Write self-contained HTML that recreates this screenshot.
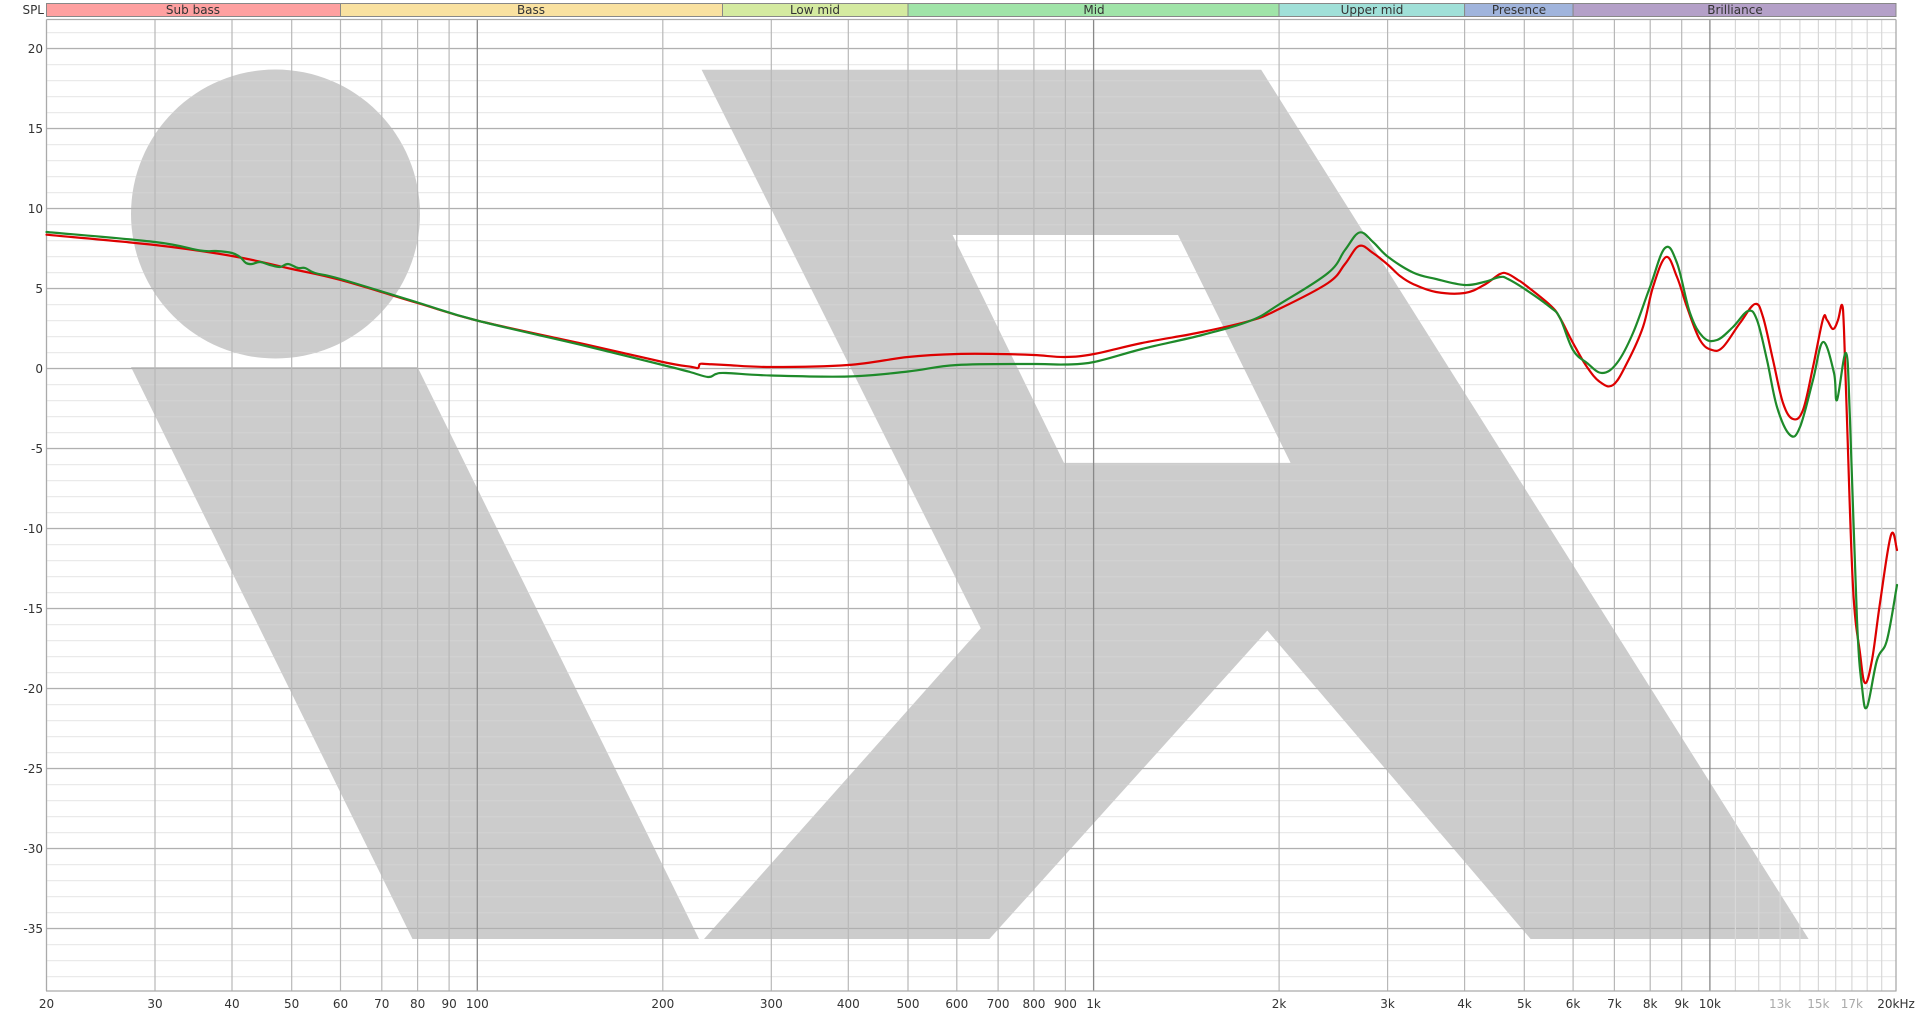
<!DOCTYPE html>
<html><head><meta charset="utf-8"><style>
html,body{margin:0;padding:0;background:#fff;width:1920px;height:1016px;overflow:hidden}
svg{display:block}
text{font-family:"DejaVu Sans","Liberation Sans",sans-serif;font-size:12px;fill:#333}
</style></head><body>
<svg width="1920" height="1016" viewBox="0 0 1920 1016" xmlns="http://www.w3.org/2000/svg">
<defs>
<pattern id="hl" x="0" y="0.5" width="20" height="16" patternUnits="userSpaceOnUse">
<line x1="0" y1="0" x2="20" y2="0" stroke="#d6d6d6" stroke-width="1.2"/>
</pattern>
</defs>
<g fill="#cccccc">
<circle cx="275.5" cy="214" r="144.5"/>
<polygon points="131,367 417.5,367 699,939 412.5,939"/>
<path fill-rule="evenodd" d="M701.6,69.8 L1261.2,69.8 L1808.6,939 L1530.6,939 L1267.3,630.6 L989.4,939 L704,939 L980.8,628.2 Z M952.6,235 L1178,235 L1290.6,462.9 L1064,462.9 Z"/>
</g>
<rect x="46.5" y="20" width="1850" height="971" fill="url(#hl)"/>
<g stroke="#b0b0b0" stroke-width="1.2">
<line x1="46" x2="1896" y1="48.5" y2="48.5"/><line x1="46" x2="1896" y1="128.5" y2="128.5"/>
<line x1="46" x2="1896" y1="208.5" y2="208.5"/><line x1="46" x2="1896" y1="288.5" y2="288.5"/>
<line x1="46" x2="1896" y1="368.5" y2="368.5"/><line x1="46" x2="1896" y1="448.5" y2="448.5"/>
<line x1="46" x2="1896" y1="528.5" y2="528.5"/><line x1="46" x2="1896" y1="608.5" y2="608.5"/>
<line x1="46" x2="1896" y1="688.5" y2="688.5"/><line x1="46" x2="1896" y1="768.5" y2="768.5"/>
<line x1="46" x2="1896" y1="848.5" y2="848.5"/><line x1="46" x2="1896" y1="928.5" y2="928.5"/>
</g>
<g stroke="#b8b8b8" stroke-width="1.2">
<line x1="155" x2="155" y1="20" y2="991"/><line x1="232" x2="232" y1="20" y2="991"/>
<line x1="291.7" x2="291.7" y1="20" y2="991"/><line x1="340.5" x2="340.5" y1="20" y2="991"/>
<line x1="381.8" x2="381.8" y1="20" y2="991"/><line x1="417.6" x2="417.6" y1="20" y2="991"/>
<line x1="449.1" x2="449.1" y1="20" y2="991"/>
<line x1="662.8" x2="662.8" y1="20" y2="991"/><line x1="771.3" x2="771.3" y1="20" y2="991"/>
<line x1="848.3" x2="848.3" y1="20" y2="991"/><line x1="908" x2="908" y1="20" y2="991"/>
<line x1="956.8" x2="956.8" y1="20" y2="991"/><line x1="998.1" x2="998.1" y1="20" y2="991"/>
<line x1="1033.9" x2="1033.9" y1="20" y2="991"/><line x1="1065.4" x2="1065.4" y1="20" y2="991"/>
<line x1="1279.1" x2="1279.1" y1="20" y2="991"/><line x1="1387.6" x2="1387.6" y1="20" y2="991"/>
<line x1="1464.6" x2="1464.6" y1="20" y2="991"/><line x1="1524.3" x2="1524.3" y1="20" y2="991"/>
<line x1="1573.1" x2="1573.1" y1="20" y2="991"/><line x1="1614.4" x2="1614.4" y1="20" y2="991"/>
<line x1="1650.2" x2="1650.2" y1="20" y2="991"/><line x1="1681.7" x2="1681.7" y1="20" y2="991"/>
</g>
<g stroke="#d8d8d8" stroke-width="1.2">
<line x1="1735.4" x2="1735.4" y1="20" y2="991"/><line x1="1758.7" x2="1758.7" y1="20" y2="991"/>
<line x1="1780.1" x2="1780.1" y1="20" y2="991"/><line x1="1799.9" x2="1799.9" y1="20" y2="991"/>
<line x1="1818.4" x2="1818.4" y1="20" y2="991"/><line x1="1835.7" x2="1835.7" y1="20" y2="991"/>
<line x1="1851.9" x2="1851.9" y1="20" y2="991"/><line x1="1867.2" x2="1867.2" y1="20" y2="991"/>
<line x1="1881.7" x2="1881.7" y1="20" y2="991"/>
</g>
<g stroke="#888" stroke-width="1.3">
<line x1="477.3" x2="477.3" y1="20" y2="991"/><line x1="1093.6" x2="1093.6" y1="20" y2="991"/>
<line x1="1709.9" x2="1709.9" y1="20" y2="991"/>
</g>
<g stroke="#aaa" stroke-width="1.3" fill="none">
<line x1="46.5" y1="19.5" x2="1896" y2="19.5"/>
<line x1="46.5" y1="19.5" x2="46.5" y2="991"/>
<line x1="46" y1="991" x2="1896.5" y2="991"/>
<line x1="1896" y1="19.5" x2="1896" y2="991"/>
</g>
<g stroke="#888" stroke-width="1">
<rect x="46.5" y="3.5" width="294" height="13" fill="#fea0a0"/>
<rect x="340.5" y="3.5" width="382" height="13" fill="#f9e1a0"/>
<rect x="722.5" y="3.5" width="185.5" height="13" fill="#d4eaa0"/>
<rect x="908" y="3.5" width="371" height="13" fill="#a0e4a8"/>
<rect x="1279" y="3.5" width="185.6" height="13" fill="#a0e0d8"/>
<rect x="1464.6" y="3.5" width="108.5" height="13" fill="#a0b4dc"/>
<rect x="1573.1" y="3.5" width="322.9" height="13" fill="#b4a0c8"/>
</g>
<g text-anchor="middle" style="font-size:11px">
<text x="193" y="14">Sub bass</text><text x="531" y="14">Bass</text>
<text x="815" y="14">Low mid</text><text x="1094" y="14">Mid</text>
<text x="1372" y="14">Upper mid</text><text x="1519" y="14">Presence</text>
<text x="1735" y="14">Brilliance</text>
</g>
<text x="44" y="14" text-anchor="end">SPL</text>
<g text-anchor="end">
<text x="43" y="53">20</text><text x="43" y="133">15</text><text x="43" y="213">10</text>
<text x="43" y="293">5</text><text x="43" y="373">0</text><text x="43" y="453">-5</text>
<text x="43" y="533">-10</text><text x="43" y="613">-15</text><text x="43" y="693">-20</text>
<text x="43" y="773">-25</text><text x="43" y="853">-30</text><text x="43" y="933">-35</text>
</g>
<g text-anchor="middle">
<text x="46.5" y="1008">20</text><text x="155" y="1008">30</text><text x="232" y="1008">40</text>
<text x="291.7" y="1008">50</text><text x="340.5" y="1008">60</text><text x="381.8" y="1008">70</text>
<text x="417.6" y="1008">80</text><text x="449.1" y="1008">90</text><text x="477.3" y="1008">100</text>
<text x="662.8" y="1008">200</text><text x="771.3" y="1008">300</text><text x="848.3" y="1008">400</text>
<text x="908" y="1008">500</text><text x="956.8" y="1008">600</text><text x="998.1" y="1008">700</text>
<text x="1033.9" y="1008">800</text><text x="1065.4" y="1008">900</text><text x="1093.6" y="1008">1k</text>
<text x="1279.1" y="1008">2k</text><text x="1387.6" y="1008">3k</text><text x="1464.6" y="1008">4k</text>
<text x="1524.3" y="1008">5k</text><text x="1573.1" y="1008">6k</text><text x="1614.4" y="1008">7k</text>
<text x="1650.2" y="1008">8k</text><text x="1681.7" y="1008">9k</text><text x="1709.9" y="1008">10k</text>
<text x="1780.1" y="1008" style="fill:#aaa">13k</text><text x="1818.4" y="1008" style="fill:#aaa">15k</text>
<text x="1851.9" y="1008" style="fill:#aaa">17k</text><text x="1896" y="1008">20kHz</text>
</g>
<g id="curves" fill="none" stroke-width="2.2" stroke-linejoin="round" stroke-linecap="round">
<polyline stroke="#dd0000" points="46.5,234.7 155,245 232,256 292,269 340.5,280 417.6,303 477,320.5 585.8,344.5 662.8,362 692,367 698,368 700,364 706,364 726,365 771,367 848,365 908,357 957,354 998,354 1034,355 1065,357 1094,354 1142,343 1202,332 1251,320.5 1279,309 1328,283 1345,264 1359,246 1373,253 1387.6,264.5 1400,276 1413,284 1436,292 1464.6,293 1484,285 1500,274 1508,274 1518,280 1524,284 1550,305 1560,318 1573,343 1587,367 1600,382 1613,385 1627,363 1643,327 1653,287 1666,257 1677,277 1687,307 1700,340 1712,350 1723,347 1740,323 1755,304 1763,317 1773,360 1783,403 1793,419 1803,410 1813,367 1823,319 1827,320 1833,329 1838,320 1842,305 1844,330 1847,420 1853,587 1860,653 1865,683 1872,660 1880,603 1891,535 1897,550"/>
<polyline stroke="#1e8a2a" points="46.5,232 155,242 200,250.5 216,251 232,253 240,257 246,263 252,264 260,262 270,265 280,267 288,264 298,268 305,268 315,273 340.5,279 417.6,302.5 477,320.5 585.8,346 662.8,365 690,372 708,377 716,374 726,373 771,375.5 848,376.5 908,371.5 957,365 1034,364 1065,364.5 1094,362 1142,349 1202,335 1251,320.5 1279,304.5 1328,273 1345,250 1359.5,232.5 1373,242 1387.6,256.5 1413,272.5 1436,279 1464.6,285 1484,282 1500,277 1508,279 1524,288.5 1550,307 1560,318 1573,350 1587,363 1602,373 1617,363 1633,333 1650,287 1665,248 1677,263 1690,313 1703,337 1717,340 1733,327 1748,311 1757,320 1767,360 1777,407 1790,435 1800,427 1813,380 1823,342 1834,373 1837,400 1846,353 1850,420 1857,620 1862,687 1867,707 1877,660 1887,640 1897,585"/>
</g>
</svg>
<script>
(function(){
var ns="http://www.w3.org/2000/svg";
var pls=document.querySelectorAll("#curves polyline");
for(var k=0;k<pls.length;k++){
var pl=pls[k];
var a=pl.getAttribute("points").trim().split(/\s+/).map(function(s){var q=s.split(",");return[+q[0],+q[1]];});
var d="M"+a[0][0]+","+a[0][1];
for(var i=0;i<a.length-1;i++){
var p0=a[i-1]||a[i],p1=a[i],p2=a[i+1],p3=a[i+2]||p2;
var t=0.18;
var c1x=p1[0]+(p2[0]-p0[0])*t,c1y=p1[1]+(p2[1]-p0[1])*t;
var c2x=p2[0]-(p3[0]-p1[0])*t,c2y=p2[1]-(p3[1]-p1[1])*t;
d+=" C"+c1x.toFixed(1)+","+c1y.toFixed(1)+" "+c2x.toFixed(1)+","+c2y.toFixed(1)+" "+p2[0]+","+p2[1];
}
var p=document.createElementNS(ns,"path");
p.setAttribute("d",d);p.setAttribute("stroke",pl.getAttribute("stroke"));
pl.parentNode.replaceChild(p,pl);
}
})();
</script>
</body></html>
